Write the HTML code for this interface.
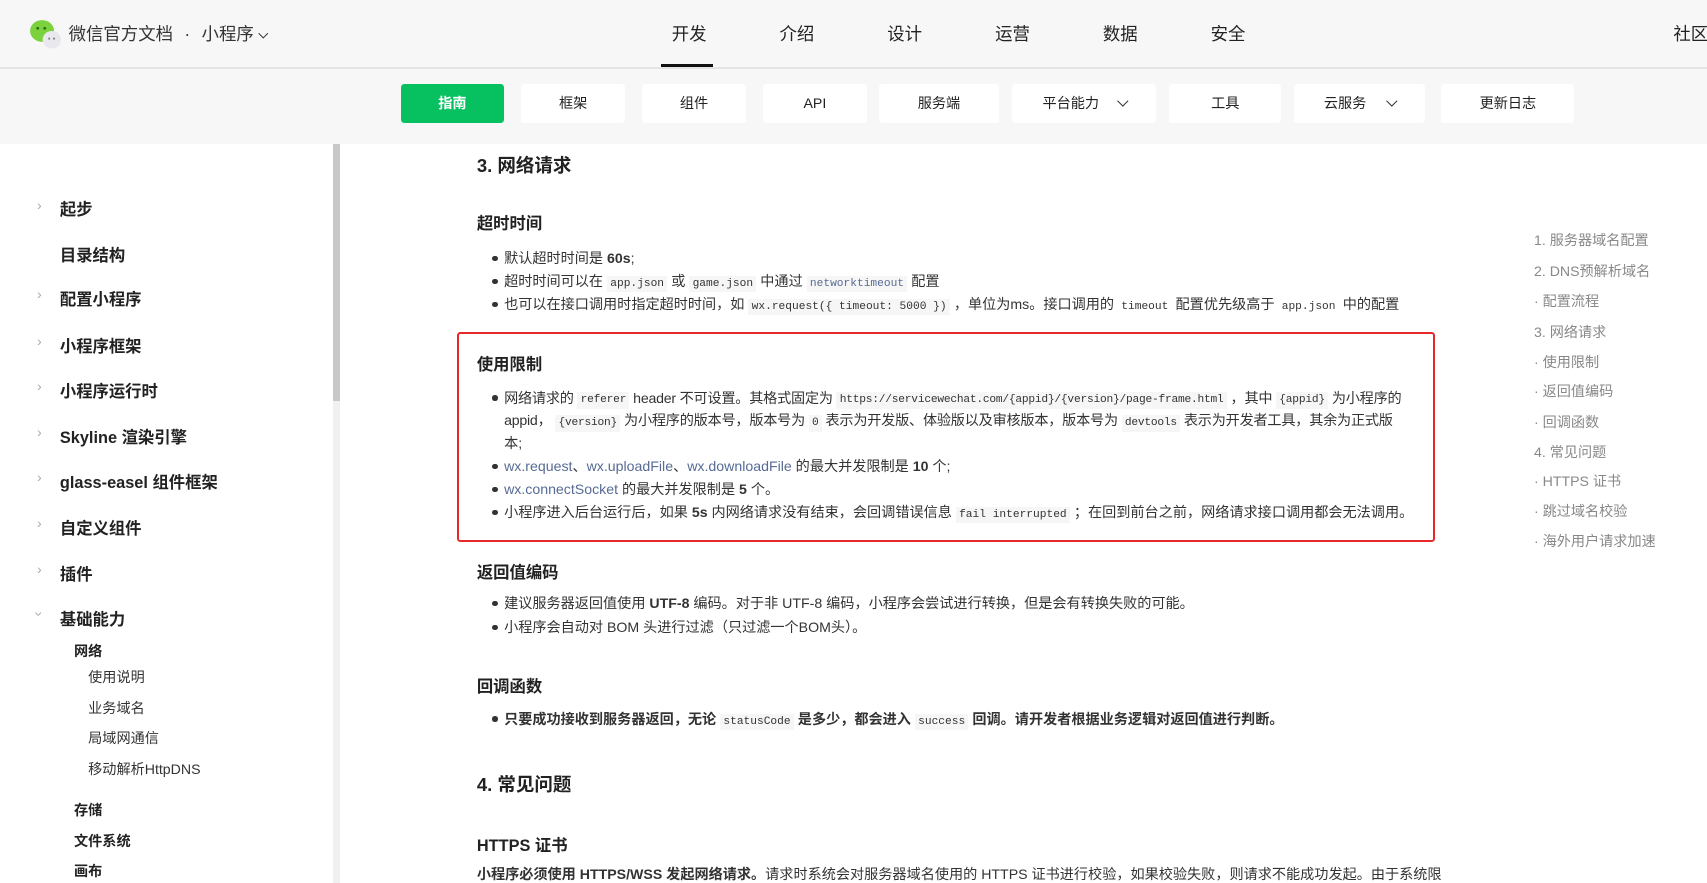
<!DOCTYPE html>
<html><head><meta charset="utf-8"><style>
*{margin:0;padding:0;box-sizing:border-box}
html,body{width:1707px;height:883px;overflow:hidden;background:#fff}
#w{zoom:1.0887;width:1568px;height:811px;position:relative;font-family:"Liberation Sans","Noto Sans CJK SC",sans-serif;color:#222}
.a{position:absolute;white-space:nowrap}
#hd{position:absolute;left:0;top:0;width:1568px;height:132px;background:#f7f7f7}
#hd .line{position:absolute;left:0;top:62px;width:1568px;height:1px;background:#e5e5e5}
.nav{font-size:16px;color:#222;top:19px}
.btn{position:absolute;top:77px;height:36px;background:#fff;border-radius:3px;font-size:13px;text-align:center;line-height:36px;color:#222}
.chev{display:inline-block;width:7px;height:7px;border-right:1.5px solid #333;border-bottom:1.5px solid #333;transform:rotate(45deg);margin-left:8px;position:relative;top:-3px}
.sb{font-size:15px;font-weight:bold;color:#222;left:55px}
.ar{left:34px;font-size:13px;color:#aaa}
.s2{font-size:13px;color:#333;left:81px}
.s3{font-size:13px;font-weight:bold;left:68px}
.bl{font-size:13px;color:#333;left:463px}
.bl:before{content:"";position:absolute;left:-11px;top:7px;width:5px;height:5px;border-radius:50%;background:#333}
code{font-family:"Liberation Mono",monospace;font-size:10.3px;background:#f6f6f6;padding:2px 3px;color:#333}
.lk{color:#576b95}
.toc{left:1409px;font-size:13px;color:#888}
</style></head><body><div id="w">
<div id="hd"><div class="line"></div>
<svg class="a" style="left:27px;top:17px" width="30" height="28" viewBox="0 0 30 28"><ellipse cx="12" cy="11" rx="11" ry="10" fill="#7bd23c"/><circle cx="8" cy="8.5" r="1.3" fill="#2b6e10"/><circle cx="14.5" cy="8.5" r="1.3" fill="#2b6e10"/><ellipse cx="21" cy="19" rx="8.5" ry="8" fill="#e8e8ee"/><circle cx="18.5" cy="18" r="1" fill="#888"/><circle cx="23" cy="18" r="1" fill="#888"/></svg>
<div class="a" style="left:63px;top:19px;font-size:16px;color:#333">微信官方文档 <span style="margin:0 6px">·</span> 小程序<span class="chev" style="width:6px;height:6px;margin-left:6px"></span></div>
<div class="a nav" style="left:617px">开发</div>
<div class="a" style="left:607px;top:59px;width:48px;height:3px;background:#111"></div>
<div class="a nav" style="left:716px">介绍</div>
<div class="a nav" style="left:815px">设计</div>
<div class="a nav" style="left:914px">运营</div>
<div class="a nav" style="left:1013px">数据</div>
<div class="a nav" style="left:1112px">安全</div>
<div class="a nav" style="left:1537px">社区</div>
<div class="btn" style="left:368px;width:95px;background:#07c160;color:#fff;font-weight:bold">指南</div>
<div class="btn" style="left:479px;width:95px">框架</div>
<div class="btn" style="left:590px;width:95px">组件</div>
<div class="btn" style="left:701px;width:95px">API</div>
<div class="btn" style="left:807px;width:111px">服务端</div>
<div class="btn" style="left:930px;width:132px">平台能力<span class="chev" style="margin-left:18px"></span></div>
<div class="btn" style="left:1074px;width:103px">工具</div>
<div class="btn" style="left:1189px;width:120px">云服务<span class="chev" style="margin-left:20px"></span></div>
<div class="btn" style="left:1324px;width:122px">更新日志</div>
</div>
<div class="a" style="left:306px;top:132px;width:6px;height:236px;background:#c8c8c8"></div>
<div class="a" style="left:306px;top:368px;width:6px;height:443px;background:#f0f0f0"></div>
<div class="a ar" style="top:181px">›</div><div class="a sb" style="top:180px">起步</div>
<div class="a sb" style="top:222px">目录结构</div>
<div class="a ar" style="top:263px">›</div><div class="a sb" style="top:263px">配置小程序</div>
<div class="a ar" style="top:306px">›</div><div class="a sb" style="top:306px">小程序框架</div>
<div class="a ar" style="top:347px">›</div><div class="a sb" style="top:347px">小程序运行时</div>
<div class="a ar" style="top:389px">›</div><div class="a sb" style="top:389px">Skyline 渲染引擎</div>
<div class="a ar" style="top:431px">›</div><div class="a sb" style="top:431px">glass-easel 组件框架</div>
<div class="a ar" style="top:473px">›</div><div class="a sb" style="top:473px">自定义组件</div>
<div class="a ar" style="top:515px">›</div><div class="a sb" style="top:515px">插件</div>
<div class="a ar" style="top:557px;transform:rotate(90deg)">›</div><div class="a sb" style="top:557px">基础能力</div>
<div class="a s3" style="top:589px">网络</div>
<div class="a s2" style="top:613px">使用说明</div>
<div class="a s2" style="top:641px">业务域名</div>
<div class="a s2" style="top:669px">局域网通信</div>
<div class="a s2" style="top:697px">移动解析HttpDNS</div>
<div class="a s3" style="top:735px">存储</div>
<div class="a s3" style="top:763px">文件系统</div>
<div class="a s3" style="top:791px">画布</div>

<div class="a" style="left:438px;top:140px;font-size:17px;font-weight:bold">3. 网络请求</div>
<div class="a" style="left:438px;top:193px;font-size:15px;font-weight:bold">超时时间</div>
<div class="a bl" style="top:228px">默认超时时间是 <b>60s</b>;</div>
<div class="a bl" style="top:249px">超时时间可以在 <code>app.json</code> 或 <code>game.json</code> 中通过 <code style="color:#576b95">networktimeout</code> 配置</div>
<div class="a bl" style="top:270px">也可以在接口调用时指定超时时间，如 <code>wx.request({ timeout: 5000 })</code> ，单位为ms。接口调用的 <code style="background:none">timeout</code> 配置优先级高于 <code style="background:none">app.json</code> 中的配置</div>
<div class="a" style="left:420px;top:305px;width:898px;height:193px;border:2px solid #e8282a;border-radius:3px"></div>
<div class="a" style="left:438px;top:322px;font-size:15px;font-weight:bold">使用限制</div>
<div class="a bl" style="top:356px;letter-spacing:-0.2px">网络请求的 <code>referer</code> header 不可设置。其格式固定为 <code>https://servicewechat.com/{appid}/{version}/page-frame.html</code> ，其中 <code>{appid}</code> 为小程序的</div>
<div class="a" style="left:463px;top:377px;font-size:13px;color:#333;letter-spacing:-0.2px">appid， <code>{version}</code> 为小程序的版本号，版本号为 <code>0</code> 表示为开发版、体验版以及审核版本，版本号为 <code>devtools</code> 表示为开发者工具，其余为正式版</div>
<div class="a" style="left:463px;top:398px;font-size:13px;color:#333">本;</div>
<div class="a bl" style="top:419px"><span class="lk">wx.request</span>、<span class="lk">wx.uploadFile</span>、<span class="lk">wx.downloadFile</span> 的最大并发限制是 <b>10</b> 个;</div>
<div class="a bl" style="top:440px"><span class="lk">wx.connectSocket</span> 的最大并发限制是 <b>5</b> 个。</div>
<div class="a bl" style="top:461px">小程序进入后台运行后，如果 <b>5s</b> 内网络请求没有结束，会回调错误信息 <code>fail interrupted</code> ；在回到前台之前，网络请求接口调用都会无法调用。</div>
<div class="a" style="left:438px;top:513px;font-size:15px;font-weight:bold">返回值编码</div>
<div class="a bl" style="top:545px">建议服务器返回值使用 <b>UTF-8</b> 编码。对于非 UTF-8 编码，小程序会尝试进行转换，但是会有转换失败的可能。</div>
<div class="a bl" style="top:567px">小程序会自动对 BOM 头进行过滤（只过滤一个BOM头）。</div>
<div class="a" style="left:438px;top:618px;font-size:15px;font-weight:bold">回调函数</div>
<div class="a bl" style="top:651px;font-weight:bold">只要成功接收到服务器返回，无论 <code style="font-weight:normal">statusCode</code> 是多少，都会进入 <code style="font-weight:normal">success</code> 回调。请开发者根据业务逻辑对返回值进行判断。</div>
<div class="a" style="left:438px;top:708px;font-size:17px;font-weight:bold">4. 常见问题</div>
<div class="a" style="left:438px;top:764px;font-size:15px;font-weight:bold">HTTPS 证书</div>
<div class="a" style="left:438px;top:794px;font-size:13px;color:#333"><b>小程序必须使用 HTTPS/WSS 发起网络请求。</b>请求时系统会对服务器域名使用的 HTTPS 证书进行校验，如果校验失败，则请求不能成功发起。由于系统限</div>

<div class="a toc" style="top:211px">1. 服务器域名配置</div>
<div class="a toc" style="top:240px">2. DNS预解析域名</div>
<div class="a toc" style="top:267px">· 配置流程</div>
<div class="a toc" style="top:296px">3. 网络请求</div>
<div class="a toc" style="top:323px">· 使用限制</div>
<div class="a toc" style="top:350px">· 返回值编码</div>
<div class="a toc" style="top:378px">· 回调函数</div>
<div class="a toc" style="top:406px">4. 常见问题</div>
<div class="a toc" style="top:433px">· HTTPS 证书</div>
<div class="a toc" style="top:460px">· 跳过域名校验</div>
<div class="a toc" style="top:488px">· 海外用户请求加速</div>
</div></body></html>
